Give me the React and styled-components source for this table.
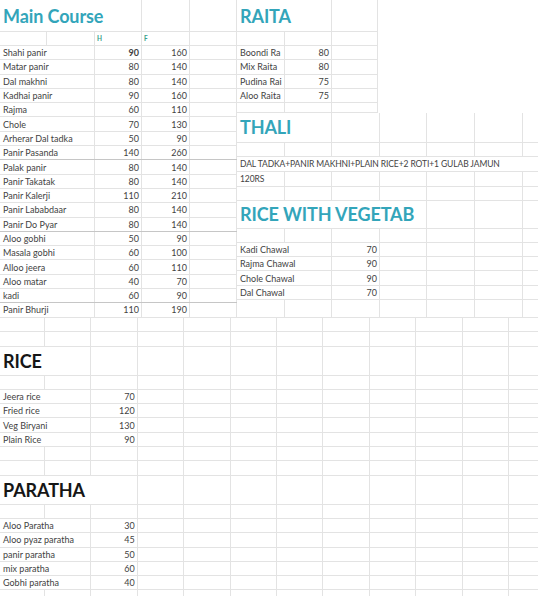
import React from "react";
import styled, { createGlobalStyle } from "styled-components";

const GlobalStyle = createGlobalStyle`
  html, body {
    margin: 0;
    padding: 0;
    background: #ffffff;
  }
  body {
    font-family: "Lato", "Open Sans", sans-serif;
  }
`;

const LINE = "#e3e3e3";
const TEAL = "#33a5ba";

const Page = styled.div`
  width: 538px;
  height: 596px;
  overflow: hidden;
  background: #fff;
  display: flex;
  flex-direction: column;
`;

const Top = styled.div`
  display: flex;
  height: 318px;
  flex-shrink: 0;
`;

const LeftPanel = styled.div`
  width: 237px;
  flex-shrink: 0;
`;

const RightPanel = styled.div`
  flex: 1;
  display: flex;
  flex-direction: column;
  overflow: hidden;
`;

const RaitaStrip = styled.div`
  display: flex;
  height: 113px;
  flex-shrink: 0;
`;

const RaitaBox = styled.div`
  width: 141px;
  flex-shrink: 0;
`;

const Blank = styled.div`
  flex: 1;
`;

const Bottom = styled.div`
  flex: 1;
  overflow: hidden;
`;

const Row = styled.div`
  display: grid;
  grid-template-columns: ${(p) => p.$cols};
  height: ${(p) => p.$h}px;
  box-sizing: border-box;
  border-bottom: 1px solid ${(p) => (p.$seam ? "#c6c6c6" : LINE)};
`;

const Cell = styled.div`
  grid-column: span ${(p) => p.$span || 1};
  min-width: 0;
  box-sizing: border-box;
  border-right: 1px solid ${LINE};
  display: flex;
  align-items: center;
  justify-content: ${(p) => (p.$right ? "flex-end" : "flex-start")};
  padding: 0 2px 0 ${(p) => (p.$indent ? 3 : 2)}px;
  font-size: 9px;
  color: #424242;
  font-weight: ${(p) => (p.$bold ? 700 : 400)};
  white-space: nowrap;
  overflow: hidden;
`;

const Heading = styled(Cell)`
  font-size: 18px;
  font-weight: 700;
  color: ${(p) => (p.$dark ? "#161616" : TEAL)};
  overflow: visible;
  letter-spacing: -0.1px;
`;

const ColTag = styled(Cell)`
  font-size: 6.5px;
  font-weight: 700;
  color: #3aa08a;
  align-items: flex-start;
  padding-top: 3px;
`;

const Note = styled(Cell)`
  font-size: 8.5px;
  overflow: visible;
  letter-spacing: -0.1px;
`;

const LEFT_COLS = "47px 48px 47px 48px 47px";
const RAITA_COLS = "48px 47px 46px";
const RIGHT_COLS = "48px 47px 48px 47px 48px 48px 48px";
const BOTTOM_COLS = "45px repeat(11, 46.4px)";
const H = 14.3;

const mainCourse = [
  { name: "Shahi panir", h: 90, f: 160, bold: true },
  { name: "Matar panir", h: 80, f: 140 },
  { name: "Dal makhni", h: 80, f: 140 },
  { name: "Kadhai panir", h: 90, f: 160 },
  { name: "Rajma", h: 60, f: 110 },
  { name: "Chole", h: 70, f: 130 },
  { name: "Arherar Dal tadka", h: 50, f: 90 },
  { name: "Panir Pasanda", h: 140, f: 260, seam: true },
  { name: "Palak panir", h: 80, f: 140 },
  { name: "Panir Takatak", h: 80, f: 140 },
  { name: "Panir Kalerji", h: 110, f: 210 },
  { name: "Panir Lababdaar", h: 80, f: 140 },
  { name: "Panir Do Pyar", h: 80, f: 140, seam: true },
  { name: "Aloo gobhi", h: 50, f: 90 },
  { name: "Masala gobhi", h: 60, f: 100 },
  { name: "Alloo jeera", h: 60, f: 110 },
  { name: "Aloo matar", h: 40, f: 70 },
  { name: "kadi", h: 60, f: 90, seam: true },
  { name: "Panir Bhurji", h: 110, f: 190 },
];

// names as they show in the sheet, where the next cell cuts them short
const raita = [
  { name: "Boondi Ra", price: 80 },
  { name: "Mix Raita", price: 80 },
  { name: "Pudina Rai", price: 75 },
  { name: "Aloo Raita", price: 75 },
];

const chawal = [
  { name: "Kadi Chawal", price: 70 },
  { name: "Rajma Chawal", price: 90 },
  { name: "Chole Chawal", price: 90 },
  { name: "Dal Chawal", price: 70 },
];

const rice = [
  { name: "Jeera rice", price: 70 },
  { name: "Fried rice", price: 120 },
  { name: "Veg Biryani", price: 130 },
  { name: "Plain Rice", price: 90 },
];

const paratha = [
  { name: "Aloo Paratha", price: 30 },
  { name: "Aloo pyaz paratha", price: 45 },
  { name: "panir paratha", price: 50 },
  { name: "mix paratha", price: 60 },
  { name: "Gobhi paratha", price: 40 },
];

// empty cells to fill the rest of a row
const fill = (n, key = "f") =>
  Array.from({ length: n }, (_, i) => <Cell key={`${key}${i}`} />);

const EmptyRow = ({ cols, count, h = H }) => (
  <Row $cols={cols} $h={h}>
    {fill(count)}
  </Row>
);

const PriceRow = ({ cols, total, item }) => (
  <Row $cols={cols} $h={H}>
    <Cell $span={2} $indent>
      {item.name}
    </Cell>
    <Cell $right>{item.price}</Cell>
    {fill(total - 3)}
  </Row>
);

const App = () => {
  return (
    <>
      <GlobalStyle />
      <Page>
        <Top>
          <LeftPanel>
            <Row $cols={LEFT_COLS} $h={32}>
              <Heading $span={3} $indent>
                Main Course
              </Heading>
              {fill(2)}
            </Row>
            <Row $cols={LEFT_COLS} $h={14}>
              {fill(2, "a")}
              <ColTag>H</ColTag>
              <ColTag>F</ColTag>
              <Cell />
            </Row>
            {mainCourse.map((item) => (
              <Row key={item.name} $cols={LEFT_COLS} $h={H} $seam={item.seam}>
                <Cell $span={2} $indent>
                  {item.name}
                </Cell>
                <Cell $right $bold={item.bold}>
                  {item.h}
                </Cell>
                <Cell $right>{item.f}</Cell>
                <Cell />
              </Row>
            ))}
          </LeftPanel>

          <RightPanel>
            <RaitaStrip>
              <RaitaBox>
                <Row $cols={RAITA_COLS} $h={32}>
                  <Heading $span={2} $indent>
                    RAITA
                  </Heading>
                  <Cell />
                </Row>
                <EmptyRow cols={RAITA_COLS} count={3} h={14} />
                {raita.map((item) => (
                  <Row key={item.name} $cols={RAITA_COLS} $h={H}>
                    <Cell $indent>{item.name}</Cell>
                    <Cell $right>{item.price}</Cell>
                    <Cell />
                  </Row>
                ))}
                <EmptyRow cols={RAITA_COLS} count={3} h={9.8} />
              </RaitaBox>
              <Blank />
            </RaitaStrip>

            <Row $cols={RIGHT_COLS} $h={30}>
              <Heading $span={2} $indent>
                THALI
              </Heading>
              {fill(5)}
            </Row>
            <EmptyRow cols={RIGHT_COLS} count={7} h={14} />
            <Row $cols={RIGHT_COLS} $h={15}>
              <Note $span={7} $indent>
                DAL TADKA+PANIR MAKHNI+PLAIN RICE+2 ROTI+1 GULAB JAMUN
              </Note>
            </Row>
            <Row $cols={RIGHT_COLS} $h={15}>
              <Note $indent>120RS</Note>
              {fill(6)}
            </Row>
            <EmptyRow cols={RIGHT_COLS} count={7} h={14} />
            <Row $cols={RIGHT_COLS} $h={28}>
              <Heading $span={4} $indent>
                RICE WITH VEGETAB
              </Heading>
              {fill(3)}
            </Row>
            <EmptyRow cols={RIGHT_COLS} count={7} h={14} />
            {chawal.map((item) => (
              <PriceRow key={item.name} cols={RIGHT_COLS} total={7} item={item} />
            ))}
            <EmptyRow cols={RIGHT_COLS} count={7} h={18} />
          </RightPanel>
        </Top>

        <Bottom>
          <EmptyRow cols={BOTTOM_COLS} count={12} />
          <EmptyRow cols={BOTTOM_COLS} count={12} />
          <Row $cols={BOTTOM_COLS} $h={29}>
            <Heading $span={2} $dark $indent>
              RICE
            </Heading>
            {fill(10)}
          </Row>
          <EmptyRow cols={BOTTOM_COLS} count={12} />
          {rice.map((item) => (
            <PriceRow key={item.name} cols={BOTTOM_COLS} total={12} item={item} />
          ))}
          <EmptyRow cols={BOTTOM_COLS} count={12} />
          <EmptyRow cols={BOTTOM_COLS} count={12} />
          <Row $cols={BOTTOM_COLS} $h={29}>
            <Heading $span={3} $dark $indent>
              PARATHA
            </Heading>
            {fill(9)}
          </Row>
          <EmptyRow cols={BOTTOM_COLS} count={12} />
          {paratha.map((item) => (
            <PriceRow key={item.name} cols={BOTTOM_COLS} total={12} item={item} />
          ))}
          <EmptyRow cols={BOTTOM_COLS} count={12} />
        </Bottom>
      </Page>
    </>
  );
};

export default App;
